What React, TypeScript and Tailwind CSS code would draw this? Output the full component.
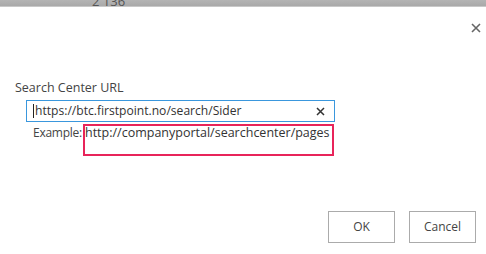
import type React from "react"

const font = { fontFamily: '"Open Sans", "Noto Sans", sans-serif' }

const App: React.FC = () => {
  return (
    <div className="w-[486px] h-[254px] bg-white overflow-hidden text-[#444]" style={font}>
      <div className="h-[7px] overflow-hidden bg-gradient-to-b from-[#b4b4b4] to-[#a9a9a9] border-b border-[#c8c8c8]">
        <div className="pl-[92px] -mt-[6px] text-[13px] leading-[15px] text-[#555]">2 136</div>
      </div>

      <div className="flex justify-end pr-[5px] pt-[16px]">
        <svg width="10" height="10" viewBox="0 0 10 10" className="text-[#666]">
          <path d="M1 1 L9 9 M9 1 L1 9" stroke="currentColor" strokeWidth="1.6" />
        </svg>
      </div>

      <div className="pl-[15px] pt-[47px] text-[12.5px] leading-[16px]">Search Center URL</div>

      <div className="ml-[26px] mt-[4px] w-[309px] h-[22px] border border-[#3a97dd] flex items-center pl-[6px] pr-[9px]">
        <span className="w-px h-[14px] bg-[#222] mr-px" />
        <span className="flex-1 text-[12.1px] leading-[16px] text-[#333]">https://btc.firstpoint.no/search/Sider</span>
        <svg width="9" height="9" viewBox="0 0 9 9" className="text-[#333]">
          <path d="M1 1 L8 8 M8 1 L1 8" stroke="currentColor" strokeWidth="1.5" />
        </svg>
      </div>

      <div className="ml-[33px] mt-[3px] flex items-baseline text-[12.5px] leading-[16px]">
        <span className="text-[12px] tracking-[-0.25px]">Example:</span>
        <span className="relative ml-[3px] text-[#333]">
          http://companyportal/searchcenter/pages
          <span className="absolute -left-[2px] -top-[1px] w-[251px] h-[32px] border-2 border-[#e8245a]" />
        </span>
      </div>

      <div className="flex justify-end gap-[14px] pr-[10px] mt-[70px]">
        <button className="w-[67px] h-[32px] border border-[#ababab] bg-white text-[12px] text-[#444]">OK</button>
        <button className="w-[67px] h-[32px] border border-[#ababab] bg-white text-[12px] text-[#444]">Cancel</button>
      </div>
    </div>
  )
}

export default App
